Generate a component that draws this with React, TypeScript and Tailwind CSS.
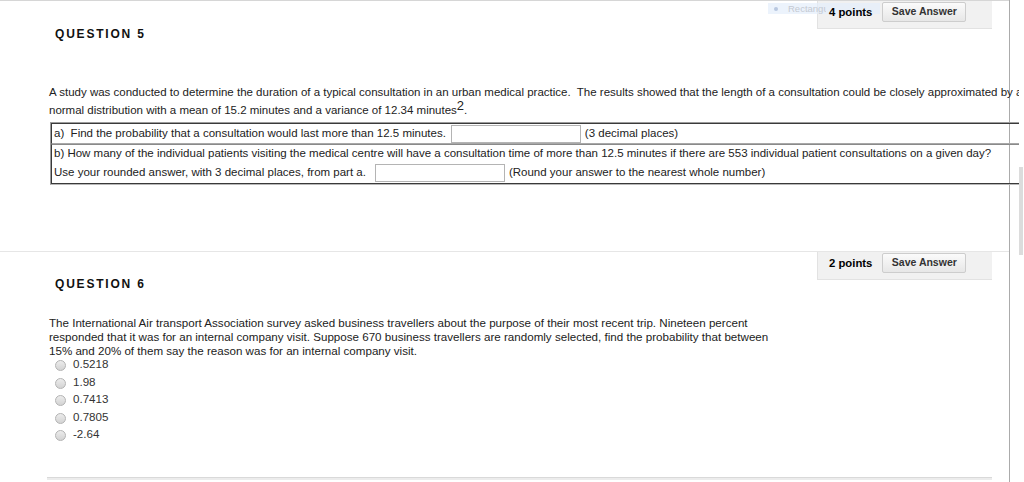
const choices = ["0.5218", "1.98", "0.7413", "0.7805", "-2.64"];

function PointsBox({ points }: { points: number }) {
  return (
    <div className="flex h-[28px] w-[175px] shrink-0 items-start border-b border-l border-[#e2e2e2] bg-[#f1f1f1] pl-[11px] pt-[1px]">
      <span className="relative z-20 mt-[3px] text-[11.3px] font-bold leading-[14px] text-black">
        {points} points
      </span>
      <button className="ml-[10px] h-[20px] w-[84px] rounded-[2px] border border-[#cdcdcd] bg-linear-to-b from-[#fbfbfb] to-[#e7e7e7] text-[10.5px] font-bold text-[#333]">
        Save Answer
      </button>
    </div>
  );
}

function Title({ children }: { children: string }) {
  return (
    <div className="text-[12px] font-bold leading-[14px] tracking-[1.8px] text-[#111]">
      {children}
    </div>
  );
}

function AnswerInput() {
  return (
    <span className="inline-block h-[18px] w-[130px] shrink-0 border border-[#b4b4b4] bg-white" />
  );
}

function Radio() {
  return (
    <span className="mt-[4px] inline-block h-[11px] w-[11px] shrink-0 rounded-full border border-[#b3b3b3] bg-linear-to-b from-[#ececec] to-[#d3d3d3]" />
  );
}

export default function App() {
  return (
    <div className="relative flex h-[482px] w-[1024px] overflow-hidden bg-white font-['Liberation_Sans',Arial,sans-serif] text-[#222]">
      {/* faded snip tooltip over the header */}
      <div className="pointer-events-none absolute left-[768px] top-[3px] z-10 flex h-[11px] w-[112px] items-center bg-[#e4eefb]/70 pl-[6px]">
        <span className="h-[4px] w-[4px] shrink-0 rounded-full bg-[#b9c8e0]" />
        <span className="ml-[10px] w-[38px] overflow-hidden whitespace-nowrap text-[9.5px] leading-[11px] text-[#c4c9d2]">
          Rectangular Snip
        </span>
      </div>

      <div className="h-full w-[1019px] shrink-0 overflow-hidden">
        <div className="min-h-full w-[1010px] border-r border-[#ababab]">
          {/* question 5 */}
          <section className="h-[251px] border-t border-[#d6d6d6]">
            <div className="flex items-start justify-between pr-[17px]">
              <div className="pl-[55px] pt-[26px]">
                <Title>QUESTION 5</Title>
              </div>
              <PointsBox points={4} />
            </div>

            <div className="mt-[42px] pl-[49px] text-[11.5px] leading-[18px]">
              <div className="whitespace-nowrap">
                A study was conducted to determine the duration of a typical consultation in an urban medical practice.&nbsp; The results showed that the length of a consultation could be closely approximated by a
              </div>
              <div className="whitespace-nowrap">
                normal distribution with a mean of 15.2 minutes and a variance of 12.34 minutes
                <sup className="top-[-4px] text-[13px] leading-none">2</sup>.
              </div>
            </div>

            <div className="ml-[50px] mt-[3px] w-[980px] border-b border-l border-t border-[#9c9c9c] border-b-[#b8b8b8] text-[11.5px]">
              <div className="flex h-[21px] items-center whitespace-nowrap border-l border-t border-b border-[#3a3a3a] border-b-[#a8a8a8] pl-[2px]">
                <span className="whitespace-pre">a)  Find the probability that a consultation would last more than 12.5 minutes.</span>
                <span className="ml-[5px] flex"><AnswerInput /></span>
                <span className="ml-[4px]">(3 decimal places)</span>
              </div>
              <div className="border-b border-l border-t border-[#3a3a3a] border-t-[#8a8a8a] pl-[2px]">
                <div className="flex h-[17px] items-center whitespace-nowrap">
                  b) How many of the individual patients visiting the medical centre will have a consultation time of more than 12.5 minutes if there are 553 individual patient consultations on a given day?
                </div>
                <div className="flex h-[21px] items-center whitespace-nowrap">
                  <span>Use your rounded answer, with 3 decimal places, from part a.</span>
                  <span className="ml-[9px] flex"><AnswerInput /></span>
                  <span className="ml-[4px]">(Round your answer to the nearest whole number)</span>
                </div>
              </div>
            </div>
          </section>

          {/* question 6 */}
          <section className="h-[226px] border-t border-[#e6e6e6]">
            <div className="flex items-start justify-between pr-[17px]">
              <div className="pl-[55px] pt-[25px]">
                <Title>QUESTION 6</Title>
              </div>
              <PointsBox points={2} />
            </div>

            <div className="mt-[25px] pl-[49px] text-[11.6px] leading-[14px]">
              <div className="whitespace-nowrap">
                The International Air transport Association survey asked business travellers about the purpose of their most recent trip. Nineteen percent
              </div>
              <div className="whitespace-nowrap">
                responded that it was for an internal company visit. Suppose 670 business travellers are randomly selected, find the probability that between
              </div>
              <div className="whitespace-nowrap">
                15% and 20% of them say the reason was for an internal company visit.
              </div>
            </div>

            <ul className="-mt-[2px] pl-[55px]">
              {choices.map((c) => (
                <li key={c} className="flex h-[17.5px] items-start">
                  <Radio />
                  <span className="ml-[7px] pt-[1px] text-[11.6px] leading-[14px] text-[#333]">
                    {c}
                  </span>
                </li>
              ))}
            </ul>
          </section>

          <div className="ml-[47px] h-[3px] w-[945px] border-t border-[#d9d9d9] bg-[#ececec]" />
        </div>
      </div>

      <div className="w-[5px] shrink-0">
        <div className="mt-[167px] h-[88px] w-[4px] bg-[#dcdcdc]" />
      </div>
    </div>
  );
}
